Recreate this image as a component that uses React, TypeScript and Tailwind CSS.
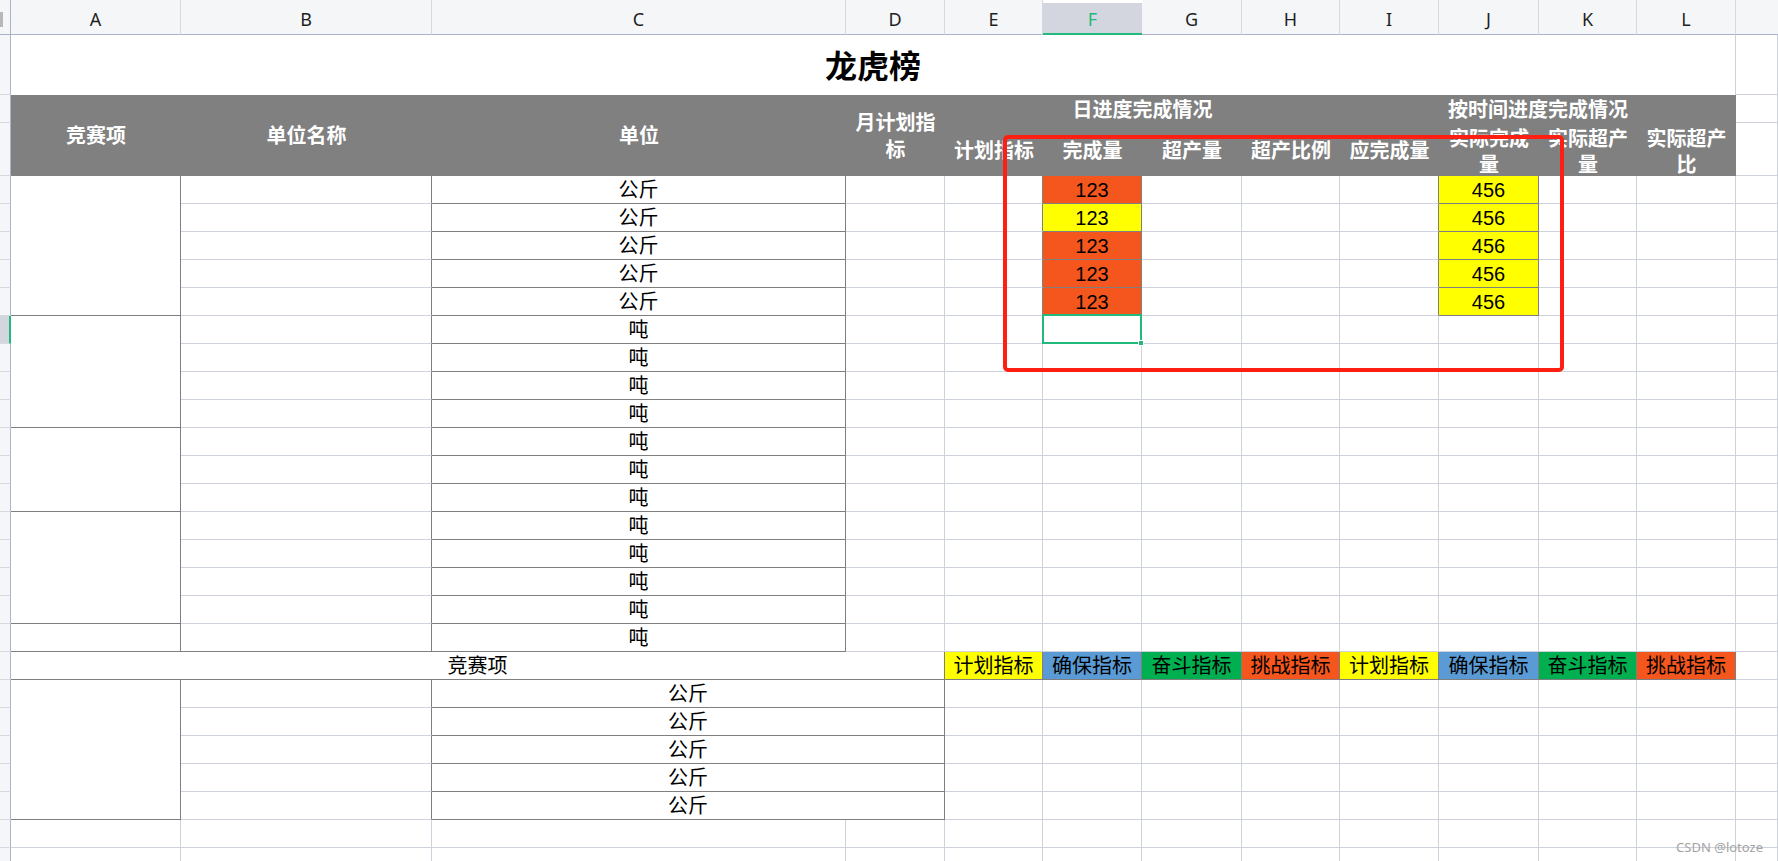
import React from "react";

const LETTERS = ["A", "B", "C", "D", "E", "F", "G", "H", "I", "J", "K", "L"];

// cell edges: right / bottom, light = sheet gridline, dark = drawn border
const LT = "border-r border-b border-[#cdd2dc]";
const DK = "border-r border-b border-[#7f7f7f]";
const DK_R = "border-r border-b border-r-[#7f7f7f] border-b-[#cdd2dc]";

const SERIF = "font-['Liberation_Serif','Noto_Sans_CJK_SC',serif]";
const SANS = "font-['Liberation_Sans','Noto_Sans_CJK_SC',sans-serif]";

const units = [...Array(5).fill("公斤"), ...Array(12).fill("吨")];
// where a merged A cell begins and how far it reaches
const groupStart: Record<number, string> = {
  0: "row-span-5",
  5: "row-span-4",
  9: "row-span-3",
  12: "row-span-4",
  16: "",
};
const fColors = ["bg-[#f4561d]", "bg-[#ffff00]", "bg-[#f4561d]", "bg-[#f4561d]", "bg-[#f4561d]"];
const SELECTED_ROW = 5;

const labels = [
  { text: "计划指标", bg: "bg-[#ffff00]" },
  { text: "确保指标", bg: "bg-[#5b9bd5]" },
  { text: "奋斗指标", bg: "bg-[#00b050]" },
  { text: "挑战指标", bg: "bg-[#f4561d]" },
  { text: "计划指标", bg: "bg-[#ffff00]" },
  { text: "确保指标", bg: "bg-[#5b9bd5]" },
  { text: "奋斗指标", bg: "bg-[#00b050]" },
  { text: "挑战指标", bg: "bg-[#f4561d]" },
];

function RowHead({ selected = false }: { selected?: boolean }) {
  return selected ? (
    <div className="bg-[#d3d6de] border-r-2 border-r-[#22b97c] border-b border-b-[#d5d9e1]" />
  ) : (
    <div className="bg-[#f5f6f8] border-r border-r-[#aab3c9] border-b border-b-[#d5d9e1]" />
  );
}

function Extra() {
  return <div className={LT} />;
}

function HeadText({ children, className = "" }: { children: React.ReactNode; className?: string }) {
  return (
    <div className={`bg-[#808080] flex items-center justify-center text-center text-white font-bold text-[20px] leading-[26px] ${className}`}>
      {children}
    </div>
  );
}

export default function App() {
  const cells: React.ReactNode[] = [];

  // column letters
  cells.push(
    <div key="corner" className="bg-[#f5f6f8] border-r border-r-[#aab3c9] border-b border-b-[#a9b2c8] flex items-start">
      <div className="w-[3px] h-[15px] mt-[12px] bg-[#b8b8b8]" />
    </div>
  );
  LETTERS.forEach((l) => {
    cells.push(
      l === "F" ? (
        <div key={l} className="mt-[3px] bg-[#d3d6de] border-b-2 border-b-[#22b97c] flex items-center justify-center pt-[2px] text-[18px] text-[#22b97c]">
          {l}
        </div>
      ) : (
        <div key={l} className="bg-[#f5f6f8] border-r border-r-[#d5d9e1] border-b border-b-[#a9b2c8] flex items-center justify-center pt-[4px] text-[18px] text-[#1f1f1f]">
          {l}
        </div>
      )
    );
  });
  cells.push(<div key="hx" className="bg-[#f5f6f8] border-b border-b-[#a9b2c8]" />);

  // title
  cells.push(<RowHead key="r1" />);
  cells.push(
    <div key="title" className={`col-span-12 border-r border-[#cdd2dc] flex items-center justify-center pt-[3px] text-[32px] font-bold text-black ${SERIF}`}>
      龙虎榜
    </div>
  );
  cells.push(<Extra key="x1" />);

  // header band
  cells.push(<RowHead key="r2" />);
  cells.push(<HeadText key="h-a" className={`row-span-2 ${SERIF}`}>竞赛项</HeadText>);
  cells.push(<HeadText key="h-b" className={`row-span-2 ${SERIF}`}>单位名称</HeadText>);
  cells.push(<HeadText key="h-c" className={`row-span-2 ${SERIF}`}>单位</HeadText>);
  cells.push(
    <HeadText key="h-d" className={`row-span-2 leading-[27px] pt-[2px] ${SERIF}`}>
      月计划指<br />标
    </HeadText>
  );
  cells.push(<HeadText key="h-day" className={`col-span-4 pt-[2px] ${SERIF}`}>日进度完成情况</HeadText>);
  cells.push(<HeadText key="h-time" className={`col-span-4 pt-[2px] ${SERIF}`}>按时间进度完成情况</HeadText>);
  cells.push(<Extra key="x2" />);

  cells.push(<RowHead key="r3" />);
  ["计划指标", "完成量", "超产量", "超产比例", "应完成量"].forEach((t, i) => {
    cells.push(<HeadText key={`h3-${i}`} className={`pt-[2px] ${SERIF}`}>{t}</HeadText>);
  });
  cells.push(<HeadText key="h3-j" className={`leading-[24px] pt-[4px] ${SERIF}`}>实际完成<br />量</HeadText>);
  cells.push(<HeadText key="h3-k" className={`leading-[24px] pt-[4px] ${SERIF}`}>实际超产<br />量</HeadText>);
  cells.push(<HeadText key="h3-l" className={`leading-[24px] pt-[4px] ${SERIF}`}>实际超产<br />比</HeadText>);
  cells.push(<Extra key="x3" />);

  // unit rows
  units.forEach((u, i) => {
    const last = i === units.length - 1;
    const colored = i < 5;
    cells.push(<RowHead key={`r-${i}`} selected={i === SELECTED_ROW} />);
    if (i in groupStart) cells.push(<div key={`a-${i}`} className={`${groupStart[i]} ${DK}`} />);
    cells.push(<div key={`b-${i}`} className={last ? DK : DK_R} />);
    cells.push(
      <div key={`c-${i}`} className={`${DK} flex items-center justify-center text-[20px] text-black ${SERIF}`}>
        {u}
      </div>
    );
    cells.push(<div key={`d-${i}`} className={LT} />);
    cells.push(<div key={`e-${i}`} className={colored ? DK_R : LT} />);
    if (colored) {
      cells.push(
        <div key={`f-${i}`} className={`${DK} ${fColors[i]} flex items-center justify-center text-[20px] text-black ${SANS}`}>
          123
        </div>
      );
    } else if (i === SELECTED_ROW) {
      cells.push(
        <div key={`f-${i}`} className={`${LT} relative`}>
          <div className="absolute -left-px -top-[2px] -right-px -bottom-px border-2 border-[#22b97c]" />
          <div className="absolute -right-[3px] -bottom-[3px] w-[6px] h-[6px] bg-[#22b97c] border border-white" />
        </div>
      );
    } else {
      cells.push(<div key={`f-${i}`} className={LT} />);
    }
    cells.push(<div key={`g-${i}`} className={LT} />);
    cells.push(<div key={`h-${i}`} className={LT} />);
    cells.push(<div key={`i-${i}`} className={colored ? DK_R : LT} />);
    if (colored) {
      cells.push(
        <div key={`j-${i}`} className={`${DK} bg-[#ffff00] flex items-center justify-center text-[20px] text-black ${SANS}`}>
          456
        </div>
      );
    } else {
      cells.push(<div key={`j-${i}`} className={LT} />);
    }
    cells.push(<div key={`k-${i}`} className={LT} />);
    cells.push(<div key={`l-${i}`} className={LT} />);
    cells.push(<Extra key={`x-${i}`} />);
  });

  // legend row
  cells.push(<RowHead key="r-legend" />);
  cells.push(
    <div key="legend" className={`col-span-4 ${DK} flex items-center justify-center text-[20px] text-black ${SERIF}`}>
      竞赛项
    </div>
  );
  labels.forEach((l, i) => {
    cells.push(
      <div key={`lg-${i}`} className={`${DK} ${l.bg} flex items-center justify-center text-[20px] text-black ${SERIF}`}>
        {l.text}
      </div>
    );
  });
  cells.push(<Extra key="x-legend" />);

  // lower block
  for (let i = 0; i < 5; i++) {
    cells.push(<RowHead key={`lr-${i}`} />);
    if (i === 0) cells.push(<div key="la" className={`row-span-5 ${DK}`} />);
    cells.push(<div key={`lb-${i}`} className={DK_R} />);
    cells.push(
      <div key={`lc-${i}`} className={`col-span-2 ${DK} flex items-center justify-center text-[20px] text-black ${SERIF}`}>
        公斤
      </div>
    );
    for (let c = 0; c < 8; c++) cells.push(<div key={`le-${i}-${c}`} className={LT} />);
    cells.push(<Extra key={`lx-${i}`} />);
  }

  // empty rows at the bottom
  for (let r = 0; r < 2; r++) {
    cells.push(<RowHead key={`er-${r}`} />);
    for (let c = 0; c < 12; c++) cells.push(<div key={`e-${r}-${c}`} className={LT} />);
    cells.push(<Extra key={`ex-${r}`} />);
  }

  return (
    <div className="relative w-[1778px] h-[861px] overflow-hidden bg-white">
      <div className="grid grid-cols-[11px_170px_251px_414px_99px_98px_99px_100px_98px_99px_100px_98px_99px_42px] grid-rows-[35px_60px_28px_53px_repeat(17,28px)_28px_repeat(5,28px)_28px_28px]">
        {cells}
      </div>

      {/* hand-drawn annotation */}
      <div className="absolute left-[1003px] top-[135px] w-[561px] h-[237px] border-4 border-[#ff1e12] rounded-[5px] pointer-events-none" />

      <div className="absolute right-[15px] bottom-[7px] text-[13px] leading-none text-[#a3a3a3] font-['Noto_Sans',sans-serif]">
        CSDN @lotoze
      </div>
    </div>
  );
}
